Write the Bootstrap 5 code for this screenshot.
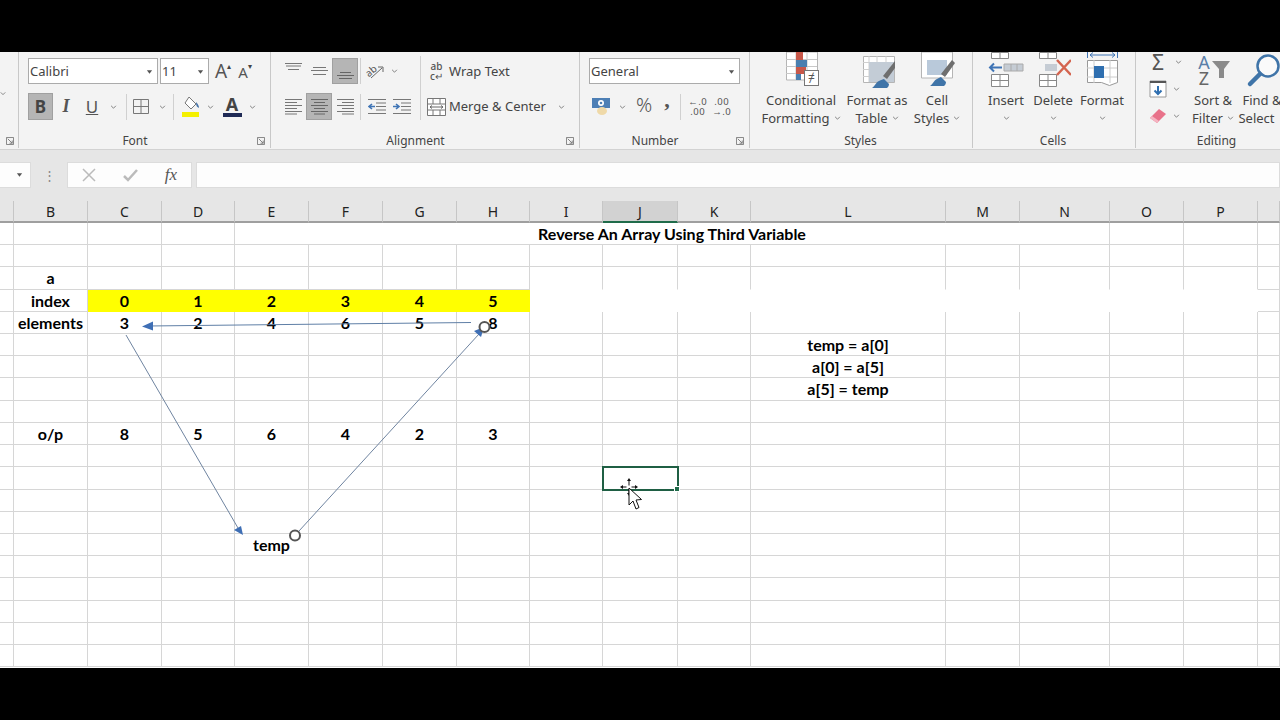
<!DOCTYPE html>
<html lang="en">
<head>
<meta charset="utf-8">
<title>Reverse An Array</title>
<link href="https://cdn.jsdelivr.net/npm/bootstrap@5.3.0/dist/css/bootstrap.min.css" rel="stylesheet">
<style>
html,body{height:720px;overflow:hidden;background:#000}
body{width:1280px;font-family:"Noto Sans",sans-serif;font-size:13px;color:#444}
.blackbar{height:52px;background:#000}
.ribbon{background:#f3f3f3;border-bottom:1px solid #d2d2d2;overflow:hidden;box-sizing:content-box;height:97px}
.rg{flex:none;height:96px;border-right:1px solid #c8c8c8;display:flex;flex-direction:column}
.g0{width:19px}
.g1{width:252px;padding-left:9px}
.g2{width:309px;padding-left:9px}
.g3{width:170px;padding-left:9px}
.g4{width:223px;padding-left:7px}
.g5{width:163px;padding-left:10px}
.g6{width:162px;padding-left:9px;border-right:0}
.gbody{flex:1 1 auto;min-height:0}
.gl{height:14px;line-height:14px;font-size:12px;display:flex;align-items:center;flex:none}
.gl span{flex:1 1 auto;text-align:center;padding-right:15px}
.g4 .gl span{padding-right:8px}
.g5 .gl span{padding-right:12px}
.g6 .gl span{padding-right:10px}
.lch{flex:none;width:8px;height:8px;margin:0 5px 0 0}
.lch0{margin-left:6px}
.rowa{height:26px;margin-top:6px;display:flex;align-items:center}
.rowb{height:27px;margin-top:9px;display:flex;align-items:center}
.combo{height:26px;background:#fff;border:1px solid #ababab;display:flex;align-items:center;justify-content:space-between;padding:1px 4px 0 1px;font-size:13px}
.combo.c1{width:130px;margin-right:2px}
.combo.c2{width:49px}
.combo.c3{width:151px}
.ib{width:26px;height:27px;display:flex;align-items:center;justify-content:center;flex:none}
.ib.on{background:#b5b5b5;border:1px solid #a0a0a0}
.ib.h26{height:26px}
.ib.w25{width:25px}
.ib.w22{width:22px}
.ttop{margin-top:-4px}
.tbot{margin-top:2px}
.ch{flex:none}
.vs{flex:none;width:1px;height:26px;background:#d0d0d0;margin-right:3px}
.vtall{height:64px;margin:4px 0 0 0;align-self:flex-start}
.big{flex:none;display:flex;flex-direction:column;align-items:center;text-align:center;line-height:18px;white-space:nowrap}
.big svg.ic{display:block;height:38px;margin-bottom:1px}
.ln{height:18px;display:flex;align-items:center;justify-content:center;gap:4px}
.w46{width:46px}.w48{width:48px}.w50{width:50px}.w56{width:56px}.w64{width:64px}.w88{width:88px}
.gA{font-size:19px;color:#555;line-height:1}
.gA2{font-size:15px;margin-top:3px}
.upm{font-size:8px;line-height:1;margin-right:7px}
.upn{font-size:8px;line-height:1}
.bB{font:700 17px "Noto Sans",sans-serif;color:#444}
.bI{font:italic 700 18px "Liberation Serif",serif;color:#555}
.bU{font:400 17px "Noto Sans",sans-serif;color:#555;text-decoration:underline}
.fcol{width:20px}
.fcolA{font:700 18px/17px "Noto Sans",sans-serif;color:#444}
.fcolB{width:19px;height:4px;background:#1f2a55}
.m2{margin-left:2px}.m3{margin-left:3px}.m4{margin-left:4px}.m5{margin-left:5px}.m6{margin-left:6px}.m7{margin-left:7px}.m8{margin-left:8px}.m9{margin-left:9px}.m10{margin-left:10px}.m12{margin-left:12px}
.alcol{width:140px;flex:none}
.pl8{padding-left:8px}.pl6{padding-left:6px}
.dn{padding-top:1px}
.abc{width:15px;font-size:10px;line-height:10px;color:#555;font-weight:500;text-align:center}
.pct{font-size:20px;line-height:1;color:#555;font-weight:300;margin-top:-3px}
.cma{font:700 22px/1 "Liberation Serif",serif;color:#555;height:14px;margin-bottom:22px}
.dec{margin-left:4px;width:20px;font-size:9.5px;line-height:9.5px;letter-spacing:.5px;color:#555;text-align:center}
.edcol{width:43px;flex:none}
.edr1{height:20px}
.edr2{height:23px;margin-top:5px}
.edr3{height:20px;margin-top:6px}
.sig{font-size:21px;line-height:18px;width:22px;color:#555;text-align:center;margin-left:2px}
.sorti{height:38px;margin-bottom:1px}
.az{font-size:18px;line-height:16px;width:15px;color:#5a7fa8;padding-top:2px;text-align:center}
.zz{color:#666}
.fnl{margin-top:9px}
.fbar{height:51px;background:#e6e6e6;padding-top:12px;gap:4px}
.fbox{height:26px;background:#fdfdfd;border:1px solid #dcdcdc}
.nm{width:31px;border-left:0;padding-right:7px}
.kb{width:28px;color:#888;font-size:13px;line-height:26px}
.fxb{width:125px;padding:0 14px}
.fxb i{font-family:"Liberation Serif",serif;font-size:17px;color:#555}
.sheetwrap{width:1280px;height:467px;overflow:hidden;background:#fff}
.xl{width:1280px;table-layout:fixed;border-collapse:separate;border-spacing:0;margin:0}
.xl col:nth-child(1){width:14px}
.xl col:nth-child(2),.xl col:nth-child(3),.xl col:nth-child(5),.xl col:nth-child(6),.xl col:nth-child(7),.xl col:nth-child(13),.xl col:nth-child(15),.xl col:nth-child(16){width:74px}
.xl col:nth-child(4),.xl col:nth-child(8),.xl col:nth-child(9),.xl col:nth-child(11){width:73px}
.xl col:nth-child(10){width:75px}
.xl col:nth-child(12){width:195px}
.xl col:nth-child(14){width:90px}
.xl col:nth-child(17){width:22px}
.xl th{height:22px;padding:2px 0 0;background:#e6e6e6;border:0;border-right:1px solid #c6c6c6;border-bottom:2px solid #9f9f9f;font-weight:400;font-size:14px;text-align:center;color:#222;vertical-align:middle;line-height:1;font-family:"Noto Sans",sans-serif}
.xl th.cur{background:#d2d2d2;border-bottom-color:#1f6b4a}
.xl td{padding:0;height:22px;border:0;border-right:1px solid #d6d6d6;border-bottom:1px solid #d6d6d6;background:#fff;font-family:Lato,sans-serif;font-weight:700;font-size:16px;text-align:center;color:#000;vertical-align:middle;line-height:1;white-space:nowrap}
.xl tr.t td{height:23px}
.xl td.nb{border-bottom-color:#fff}
.xl td.wt{border-color:#fff}
.xl td.yl{background:#ff0;border-color:#ff0}
.xl td.sel{position:relative;outline:2px solid #1f5f44;outline-offset:-1px}
.xl td.sel::after{content:"";position:absolute;right:-3px;bottom:-3px;width:6px;height:6px;background:#1f6b4a;border:1px solid #fff}
.xl td.ttl{padding-top:1px}
.over{left:0;top:0;pointer-events:none}
.defs{width:0;height:0}
</style>
</head>
<body>
<svg class="defs d-block position-absolute">
<symbol id="chev" viewBox="0 0 8 5"><path d="M1 1l3 3 3-3" stroke="#666" fill="none"/></symbol>
<symbol id="caret" viewBox="0 0 8 4"><path d="M1 0h6L4 4z" fill="#555"/></symbol>
<symbol id="lch" viewBox="0 0 9 9"><path d="M.5.5h8v8h-8zM2 2l5 5M4 7h3V4" stroke="#777" fill="none"/></symbol>
</svg>

<div class="blackbar"></div>

<div class="ribbon d-flex">
  <div class="rg g0">
    <div class="gbody d-flex align-items-center"><svg width="6" height="5"><use href="#chev"/></svg></div>
    <div class="gl"><svg class="lch lch0" viewBox="0 0 9 9"><use href="#lch"/></svg></div>
  </div>

  <div class="rg g1">
    <div class="gbody">
      <div class="rowa">
        <div class="combo c1">Calibri<svg width="7" height="4"><use href="#caret"/></svg></div>
        <div class="combo c2">11<svg width="7" height="4"><use href="#caret"/></svg></div>
        <div class="d-flex align-items-start m6">
          <span class="gA">A</span><span class="upm">▴</span>
          <span class="gA gA2">A</span><span class="upn">▾</span>
        </div>
      </div>
      <div class="rowb">
        <div class="ib on w25 bB">B</div>
        <div class="ib bI">I</div>
        <div class="ib bU">U</div>
        <svg class="ch m5" width="7" height="4"><use href="#chev"/></svg>
        <div class="vs m9"></div>
        <svg class="m2" width="18" height="17" viewBox="0 0 18 17" fill="none" stroke="#777"><path d="M1.500 1.500h15v14h-15zM9 1.500v14M1.500 8.500h15"/></svg>
        <svg class="ch m9" width="7" height="4"><use href="#chev"/></svg>
        <div class="vs m7"></div>
        <svg class="m4" width="20" height="22" viewBox="0 0 20 22"><path d="M8 1l7 7-5 5-6-6z" fill="#fff" stroke="#777"/><path d="M15 6c2 2 3 4 3 6-2-1-3-2-3-6z" fill="#4472a8"/><rect x="1" y="16" width="17" height="5" fill="#f4f000"/></svg>
        <svg class="ch m6" width="7" height="4"><use href="#chev"/></svg>
        <div class="d-flex flex-column align-items-center fcol m8"><span class="fcolA">A</span><span class="d-block fcolB"></span></div>
        <svg class="ch m7" width="7" height="4"><use href="#chev"/></svg>
      </div>
    </div>
    <div class="gl"><span>Font</span><svg class="lch" viewBox="0 0 9 9"><use href="#lch"/></svg></div>
  </div>

  <div class="rg g2">
    <div class="gbody d-flex">
      <div class="alcol">
        <div class="rowa">
          <div class="ib h26"><svg class="ttop" width="17" height="14" viewBox="0 0 17 14" stroke="#777"><path d="M0 1.500h17M1 4h15M3 7.500h11"/></svg></div>
          <div class="ib h26"><svg width="17" height="14" viewBox="0 0 17 14" stroke="#777"><path d="M2 3.500h13M0 6.500h17M2 10.500h13"/></svg></div>
          <div class="ib h26 on"><svg class="tbot" width="17" height="14" viewBox="0 0 17 14" stroke="#666"><path d="M3 7.500h11M0 10.500h17M2 13.500h13"/></svg></div>
          <div class="vs m2"></div>
          <div class="ib w22"><svg width="18" height="17" viewBox="0 0 18 17" fill="none"><text x="0" y="11" font-size="10" fill="#555" transform="rotate(-40 6 9)" font-family="Noto Sans">ab</text><path d="M5 15L16 5M17 9V4h-5" stroke="#666"/></svg></div>
          <svg class="ch m5" width="7" height="4"><use href="#chev"/></svg>
        </div>
        <div class="rowb">
          <div class="ib"><svg width="17" height="17" viewBox="0 0 17 17" stroke="#777"><path d="M0 1.500h17M0 4.500h12M0 7.500h17M0 10.500h12M0 13.500h17M0 16h12"/></svg></div>
          <div class="ib on"><svg width="17" height="17" viewBox="0 0 17 17" stroke="#666"><path d="M0 1.500h17M3 4.500h11M0 7.500h17M3 10.500h11M0 13.500h17M3 16h11"/></svg></div>
          <div class="ib"><svg width="17" height="17" viewBox="0 0 17 17" stroke="#777"><path d="M0 1.500h17M5 4.500h12M0 7.500h17M5 10.500h12M0 13.500h17M5 16h12"/></svg></div>
          <div class="vs m2"></div>
          <div class="ib w25"><svg width="18" height="17" viewBox="0 0 18 17" stroke="#777" fill="none"><path d="M0 1.500h18M8 5h10M8 8.500h10M8 12h10M0 15.500h18"/><path d="M7 8.500H1M4 6L1 8.500 4 11" stroke="#3f74b5" stroke-width="1.600"/></svg></div>
          <div class="ib w25"><svg width="18" height="17" viewBox="0 0 18 17" stroke="#777" fill="none"><path d="M0 1.500h18M8 5h10M8 8.500h10M8 12h10M0 15.500h18"/><path d="M0 8.500h6M3 6l3 2.500L3 11" stroke="#3f74b5" stroke-width="1.600"/></svg></div>
        </div>
      </div>
      <div class="vs vtall"></div>
      <div>
        <div class="rowa pl8">
          <span class="d-inline-block abc">ab<br>c↵</span>
          <span class="m5 dn">Wrap Text</span>
        </div>
        <div class="rowb pl6">
          <svg width="19" height="18" viewBox="0 0 19 18" fill="#fff" stroke="#777"><path d="M.5.5h18v17H.5zM.5 6h18M.5 12h18M6 .5V6M13 .5V6M6 12v5.500M13 12v5.500"/><path d="M3 9h13M5 7.500L3 9l2 1.500M14 7.500L16 9l-2 1.500" stroke="#666" fill="none"/></svg>
          <span class="m3 dn">Merge &amp; Center</span>
          <svg class="ch m12" width="7" height="4"><use href="#chev"/></svg>
        </div>
      </div>
    </div>
    <div class="gl"><span>Alignment</span><svg class="lch" viewBox="0 0 9 9"><use href="#lch"/></svg></div>
  </div>

  <div class="rg g3">
    <div class="gbody">
      <div class="rowa"><div class="combo c3">General<svg width="7" height="4"><use href="#caret"/></svg></div></div>
      <div class="rowb">
        <svg class="m3" width="19" height="20" viewBox="0 0 19 20"><rect x="0" y="1" width="18" height="10" fill="#4d7fb5"/><circle cx="9" cy="6" r="3" fill="#fff"/><circle cx="9" cy="6" r="1.300" fill="#4d7fb5"/><ellipse cx="10" cy="14" rx="5" ry="4" fill="#efd9a8"/></svg>
        <svg class="ch m8" width="7" height="4"><use href="#chev"/></svg>
        <span class="pct m10">%</span>
        <span class="cma m12">,</span>
        <div class="vs m10"></div>
        <span class="dec">←.0<br>.00</span>
        <span class="dec m7">.00<br>→.0</span>
      </div>
    </div>
    <div class="gl"><span>Number</span><svg class="lch" viewBox="0 0 9 9"><use href="#lch"/></svg></div>
  </div>

  <div class="rg g4">
    <div class="gbody d-flex">
      <div class="big w88">
        <svg class="ic" width="36" viewBox="0 0 36 38"><path d="M3.500 0h31v28h-31z" fill="#fff" stroke="#b5b5b5"/><path d="M3 7.500h31M3 14.500h31M3 21.500h31M13 0v28M24 0v28" stroke="#c8c8c8"/><rect x="13" y="0" width="7" height="8" fill="#c8584a"/><rect x="13" y="8" width="11" height="7" fill="#4a7fb0"/><rect x="13" y="15" width="10" height="7" fill="#c8584a"/><rect x="13" y="22" width="5" height="6" fill="#4a7fb0"/><rect x="21.500" y="18.500" width="14" height="15" fill="#fff" stroke="#777"/><text x="28.500" y="30" font-size="12" text-anchor="middle" fill="#555">≠</text></svg>
        <div class="ln">Conditional</div>
        <div class="ln">Formatting <svg width="7" height="4"><use href="#chev"/></svg></div>
      </div>
      <div class="big w64">
        <svg class="ic" width="36" viewBox="0 0 36 38"><path d="M4.500 4.500h31v26h-31z" fill="#fff" stroke="#b5b5b5"/><path d="M4 10.500h31M4 17.500h31M4 24.500h31M10 4v26M18 4v26M27 4v26" stroke="#cfcfcf"/><path d="M10 10h25v20H10z" fill="#c3ccd6"/><path d="M36 9l3 3-11 15-4-3z" fill="#6e6e6e"/><path d="M13 36c3-2 4-6 7-7 2-1 4-2 5-2l5 5c0 2-1 3-2 4z" fill="#3f74a8"/></svg>
        <div class="ln">Format as</div>
        <div class="ln">Table <svg width="7" height="4"><use href="#chev"/></svg></div>
      </div>
      <div class="big w56">
        <svg class="ic" width="36" viewBox="0 0 36 38"><path d="M2.500 0h31v26h-31z" fill="#fff" stroke="#b5b5b5"/><path d="M8 8h20v15H8z" fill="#b9c9da"/><path d="M33 8l3 3-10 14-4-3z" fill="#6e6e6e"/><path d="M11 34c3-2 4-6 7-7 2-1 3-2 4-2l5 5c0 2-1 3-2 4z" fill="#3f74a8"/></svg>
        <div class="ln">Cell</div>
        <div class="ln">Styles <svg width="7" height="4"><use href="#chev"/></svg></div>
      </div>
    </div>
    <div class="gl"><span>Styles</span></div>
  </div>

  <div class="rg g5">
    <div class="gbody d-flex">
      <div class="big w46">
        <svg class="ic" width="36" viewBox="0 0 36 38"><path d="M3.500.5h17v6h-17zM12 .5v6M3.500 22.500h17v12h-17zM12 22.500v12M3.500 28.500h17" fill="#fff" stroke="#888"/><path d="M16 12h19v7H16z" fill="#c5ccd4" stroke="#aaa"/><path d="M23 12v7M29 12v7" stroke="#aaa"/><path d="M14 15.500H2M6 11.500l-4 4 4 4" stroke="#3f74b5" stroke-width="2" fill="none"/></svg>
        <div class="ln">Insert</div>
        <div class="ln"><svg width="7" height="4"><use href="#chev"/></svg></div>
      </div>
      <div class="big w48">
        <svg class="ic" width="36" viewBox="0 0 36 38"><path d="M4.500.5h17v6h-17zM13 .5v6M4.500 22.500h17v12h-17zM13 22.500v12M4.500 28.500h17" fill="#fff" stroke="#888"/><path d="M10 12h12v7H10z" fill="#c5ccd4"/><path d="M22 8l14 15M36 8L22 23" stroke="#d4644f" stroke-width="2.500"/></svg>
        <div class="ln">Delete</div>
        <div class="ln"><svg width="7" height="4"><use href="#chev"/></svg></div>
      </div>
      <div class="big w50">
        <svg class="ic" width="36" viewBox="0 0 36 38"><path d="M3.500 8.500h30v22l-8 3-8-3h-14z" fill="#fff" stroke="#999"/><path d="M10 8v23M26 8v23M3 16h30M3 25h30" stroke="#ccc"/><rect x="10" y="14" width="10" height="12" fill="#2f6fb0"/><path d="M3.500 0v6M33.500 0v6M6 3h25M9 .5L6 3l3 2.500M28 .5L31 3l-3 2.500" stroke="#3f74b5" fill="none"/></svg>
        <div class="ln">Format</div>
        <div class="ln"><svg width="7" height="4"><use href="#chev"/></svg></div>
      </div>
    </div>
    <div class="gl"><span>Cells</span></div>
  </div>

  <div class="rg g6">
    <div class="gbody d-flex">
      <div class="edcol">
        <div class="d-flex align-items-center edr1"><span class="sig">Σ</span><svg class="ch m6" width="7" height="4"><use href="#chev"/></svg></div>
        <div class="d-flex align-items-center edr2"><svg class="m4" width="18" height="18" viewBox="0 0 18 18"><path d="M1 1h16v16H1z" fill="#fff" stroke="#999"/><path d="M1 2h16" stroke="#555" stroke-width="2"/><path d="M9 6v8M5.500 10.500L9 14l3.500-3.500" stroke="#2f6fb0" stroke-width="2" fill="none"/></svg><svg class="ch m6" width="7" height="4"><use href="#chev"/></svg></div>
        <div class="d-flex align-items-center edr3"><svg class="m4" width="18" height="18" viewBox="0 0 18 18"><path d="M1 11L10 2l7 5-9 9z" fill="#e8728a"/><path d="M1 11l7 5 2-2-7-5z" fill="#f5b5c2"/></svg><svg class="ch m6" width="7" height="4"><use href="#chev"/></svg></div>
      </div>
      <div class="big w50">
        <div class="d-flex justify-content-center align-items-start sorti">
          <span class="az">A<br><span class="zz">Z</span></span>
          <svg class="fnl" width="18" height="17" viewBox="0 0 18 17"><path d="M0 0h18l-6 8v9H7V8z" fill="#8a8a8a"/></svg>
        </div>
        <div class="ln">Sort &amp;</div>
        <div class="ln">Filter <svg width="7" height="4"><use href="#chev"/></svg></div>
      </div>
      <div class="big w48">
        <svg class="ic" width="36" viewBox="0 0 36 38"><circle cx="24" cy="14" r="10.500" fill="#fff" fill-opacity=".6" stroke="#3f74a8" stroke-width="2.500"/><path d="M16 22L6 32" stroke="#3f74a8" stroke-width="4.500" stroke-linecap="round"/></svg>
        <div class="ln">Find &amp;</div>
        <div class="ln">Select <svg width="7" height="4"><use href="#chev"/></svg></div>
      </div>
    </div>
    <div class="gl"><span>Editing</span></div>
  </div>
</div>

<div class="fbar d-flex align-items-start">
  <div class="fbox nm d-flex align-items-center justify-content-end flex-none"><svg width="7" height="4"><use href="#caret"/></svg></div>
  <div class="kb text-center flex-none">⋮</div>
  <div class="fbox fxb d-flex align-items-center justify-content-between flex-none">
    <svg width="14" height="14" viewBox="0 0 14 14" stroke="#bbb" stroke-width="1.500"><path d="M1 1l12 12M13 1L1 13"/></svg>
    <svg width="15" height="14" viewBox="0 0 15 14" stroke="#bbb" stroke-width="2.500" fill="none"><path d="M1 8l4 4 9-10"/></svg>
    <i>fx</i>
  </div>
  <div class="fbox flex-grow-1"></div>
</div>

<div class="sheetwrap position-relative">
<table class="table xl">
<colgroup><col><col><col><col><col><col><col><col><col><col><col><col><col><col><col><col><col></colgroup>
<thead><tr><th></th><th>B</th><th>C</th><th>D</th><th>E</th><th>F</th><th>G</th><th>H</th><th>I</th><th class="cur">J</th><th>K</th><th>L</th><th>M</th><th>N</th><th>O</th><th>P</th><th></th></tr></thead>
<tbody>
<tr><td></td><td></td><td></td><td></td><td class="ttl" colspan="10">Reverse An Array Using Third Variable</td><td></td><td></td><td></td></tr>
<tr><td><td><td><td><td><td><td><td><td><td><td><td><td><td><td><td><td><td></tr>
<tr class="t"><td></td><td>a</td><td></td><td></td><td></td><td></td><td></td><td></td><td class="nb"></td><td class="nb"></td><td class="nb"></td><td class="nb"></td><td class="nb"></td><td class="nb"></td><td class="nb"></td><td class="nb"></td><td></td></tr>
<tr><td></td><td>index</td><td class="yl">0</td><td class="yl">1</td><td class="yl">2</td><td class="yl">3</td><td class="yl">4</td><td class="yl">5</td><td class="wt"></td><td class="wt"></td><td class="wt"></td><td class="wt"></td><td class="wt"></td><td class="wt"></td><td class="wt"></td><td class="wt"></td><td></td></tr>
<tr><td></td><td>elements</td><td>3</td><td>2</td><td>4</td><td>6</td><td>5</td><td>8</td><td></td><td></td><td></td><td></td><td></td><td></td><td></td><td></td><td></td></tr>
<tr><td></td><td></td><td></td><td></td><td></td><td></td><td></td><td></td><td></td><td></td><td></td><td>temp = a[0]</td><td></td><td></td><td></td><td></td><td></td></tr>
<tr><td></td><td></td><td></td><td></td><td></td><td></td><td></td><td></td><td></td><td></td><td></td><td>a[0] = a[5]</td><td></td><td></td><td></td><td></td><td></td></tr>
<tr class="t"><td></td><td></td><td></td><td></td><td></td><td></td><td></td><td></td><td></td><td></td><td></td><td>a[5] = temp</td><td></td><td></td><td></td><td></td><td></td></tr>
<tr><td><td><td><td><td><td><td><td><td><td><td><td><td><td><td><td><td><td></tr>
<tr><td></td><td>o/p</td><td>8</td><td>5</td><td>6</td><td>4</td><td>2</td><td>3</td><td></td><td></td><td></td><td></td><td></td><td></td><td></td><td></td><td></td></tr>
<tr><td><td><td><td><td><td><td><td><td><td><td><td><td><td><td><td><td><td></tr>
<tr class="t"><td></td><td></td><td></td><td></td><td></td><td></td><td></td><td></td><td></td><td class="sel"></td><td></td><td></td><td></td><td></td><td></td><td></td><td></td></tr>
<tr><td><td><td><td><td><td><td><td><td><td><td><td><td><td><td><td><td><td></tr>
<tr><td><td><td><td><td><td><td><td><td><td><td><td><td><td><td><td><td><td></tr>
<tr><td></td><td></td><td></td><td></td><td>temp</td><td></td><td></td><td></td><td></td><td></td><td></td><td></td><td></td><td></td><td></td><td></td><td></td></tr>
<tr><td><td><td><td><td><td><td><td><td><td><td><td><td><td><td><td><td><td></tr>
<tr class="t"><td><td><td><td><td><td><td><td><td><td><td><td><td><td><td><td><td><td></tr>
<tr><td><td><td><td><td><td><td><td><td><td><td><td><td><td><td><td><td><td></tr>
<tr><td><td><td><td><td><td><td><td><td><td><td><td><td><td><td><td><td><td></tr>
<tr><td><td><td><td><td><td><td><td><td><td><td><td><td><td><td><td><td><td></tr>
</tbody>
</table>
<svg class="over position-absolute" width="1280" height="467" viewBox="0 201 1280 467" fill="none">
  <path d="M471 322.500L148 326" stroke="#5f7fa6" stroke-width="1"/>
  <path d="M142 326.500l11-5v9z" fill="#3f6fb5"/>
  <path d="M126 335L238 528" stroke="#6f84a0" stroke-width="1"/>
  <path d="M243 535l-9-5 7-4z" fill="#3f6fb5"/>
  <path d="M299 531L479 334" stroke="#6f84a0" stroke-width="1"/>
  <path d="M484 327l-3 10-7-6z" fill="#3f6fb5"/>
  <circle cx="484.500" cy="327" r="5" fill="#fff" stroke="#555" stroke-width="2"/>
  <circle cx="295" cy="535.500" r="5" fill="#fff" stroke="#555" stroke-width="2"/>
  <path d="M629 478l-2 3h1.500v4.500h1V481h1.500zM620 487l3-2v1.500h3.500v1H623V489zM638 487l-3-2v1.500h-3.500v1h3.500V489zM629 496l-2-3h1.500v-4h1v4h1.500z" fill="#111"/>
  <path d="M629 488v17l4-4 3 8 3-1.500-3-7.500 5.500-.5z" fill="#fff" stroke="#111" stroke-width="1"/>
</svg>
</div>

<script src="https://cdn.jsdelivr.net/npm/bootstrap@5.3.0/dist/js/bootstrap.bundle.min.js"></script>
</body>
</html>
